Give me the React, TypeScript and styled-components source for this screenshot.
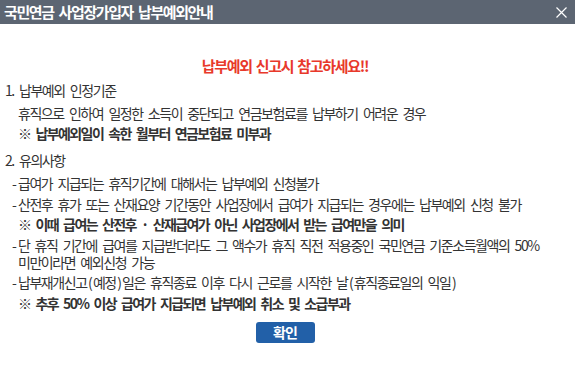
import { createGlobalStyle, styled } from "styled-components"

const GlobalStyle = createGlobalStyle`
  html, body {
    margin: 0;
    padding: 0;
    background: #fff;
  }
  body {
    font-family: "Noto Sans CJK KR", "Noto Sans", sans-serif;
    color: #333;
  }
`

const App = () => {
  return (
    <Dialog>
      <GlobalStyle />
      <TitleBar>
        <Title>국민연금 사업장가입자 납부예외안내</Title>
        <CloseButton aria-label="닫기">
          <svg width="11" height="11" viewBox="0 0 11 11">
            <path d="M0.5 0.5 L10.5 10.5 M10.5 0.5 L0.5 10.5" stroke="#fff" strokeWidth="1.2" fill="none" />
          </svg>
        </CloseButton>
      </TitleBar>
      <Body>
        <Heading>납부예외 신고시 참고하세요!!</Heading>
        <Section>
          <SectionTitle>1. 납부예외 인정기준</SectionTitle>
          <Row>휴직으로 인하여 일정한 소득이 중단되고 연금보험료를 납부하기 어려운 경우</Row>
          <Row bold>※ 납부예외일이 속한 월부터 연금보험료 미부과</Row>
        </Section>
        <Section gap>
          <SectionTitle>2. 유의사항</SectionTitle>
          <Item>
            <Dash>-</Dash>
            <span>급여가 지급되는 휴직기간에 대해서는 납부예외 신청불가</span>
          </Item>
          <Item>
            <Dash>-</Dash>
            <span>산전후 휴가 또는 산재요양 기간동안 사업장에서 급여가 지급되는 경우에는 납부예외 신청 불가</span>
          </Item>
          <Row bold>※ 이때 급여는 산전후 · 산재급여가 아닌 사업장에서 받는 급여만을 의미</Row>
          <Item>
            <Dash>-</Dash>
            <span>
              단 휴직 기간에 급여를 지급받더라도 그 액수가 휴직 직전 적용중인 국민연금 기준소득월액의 50%
              <br />
              미만이라면 예외신청 가능
            </span>
          </Item>
          <Item>
            <Dash>-</Dash>
            <span>
              납부재개신고<Paren>(</Paren>예정<Paren>)</Paren>일은 휴직종료 이후 다시 근로를 시작한 날
              <Paren>(</Paren>휴직종료일의 익일<Paren>)</Paren>
            </span>
          </Item>
          <Row bold>※ 추후 50% 이상 급여가 지급되면 납부예외 취소 및 소급부과</Row>
        </Section>
        <ButtonRow>
          <ConfirmButton>확인</ConfirmButton>
        </ButtonRow>
      </Body>
    </Dialog>
  )
}

const Dialog = styled.div`
  width: 575px;
  min-height: 378px;
  background: #fff;
`

const TitleBar = styled.div`
  height: 24px;
  background: #5c6572;
  display: flex;
  align-items: center;
  justify-content: space-between;
  padding: 0 8px 0 4px;
`

const Title = styled.h1`
  margin: 0;
  color: #fff;
  font-size: 15px;
  font-weight: 700;
  letter-spacing: -1.4px;
  word-spacing: 3px;
  line-height: 24px;
`

const CloseButton = styled.button`
  border: 0;
  padding: 0;
  background: none;
  width: 11px;
  height: 11px;
  display: flex;
  cursor: pointer;
`

const Body = styled.div`
  padding: 32px 10px 0 5px;
  font-size: 14px;
  letter-spacing: -1.45px;
  word-spacing: 3.5px;
`

const Heading = styled.h2`
  margin: 0;
  text-align: center;
  color: #e8392b;
  font-size: 15px;
  font-weight: 700;
  line-height: 20px;
  letter-spacing: -1.3px;
  word-spacing: 2px;
`

const Section = styled.div<{ gap?: boolean }>`
  display: flex;
  flex-direction: column;
  gap: 3.5px;
  margin-top: ${({ gap }) => (gap ? "10px" : "5.5px")};
`

const SectionTitle = styled.div`
  line-height: 17px;
  margin-bottom: 2.5px;
  white-space: nowrap;
`

const Row = styled.div<{ bold?: boolean }>`
  line-height: 17px;
  padding-left: 13px;
  font-weight: ${({ bold }) => (bold ? 700 : 400)};
  letter-spacing: ${({ bold }) => (bold ? "-1.6px" : "inherit")};
  white-space: nowrap;
`

const Item = styled.div`
  display: flex;
  line-height: 17px;
  white-space: nowrap;
`

const Dash = styled.span`
  width: 6px;
  margin-left: 7px;
  flex: none;
`

const Paren = styled.span`
  margin: 0 1.5px;
`

const ButtonRow = styled.div`
  display: flex;
  justify-content: center;
  margin-top: 10px;
`

const ConfirmButton = styled.button`
  width: 59px;
  height: 21px;
  border: 0;
  border-radius: 3px;
  background: #2260a8;
  color: #fff;
  font-family: inherit;
  font-size: 14px;
  font-weight: 700;
  letter-spacing: -1px;
  padding: 0;
  cursor: pointer;
`

export default App
